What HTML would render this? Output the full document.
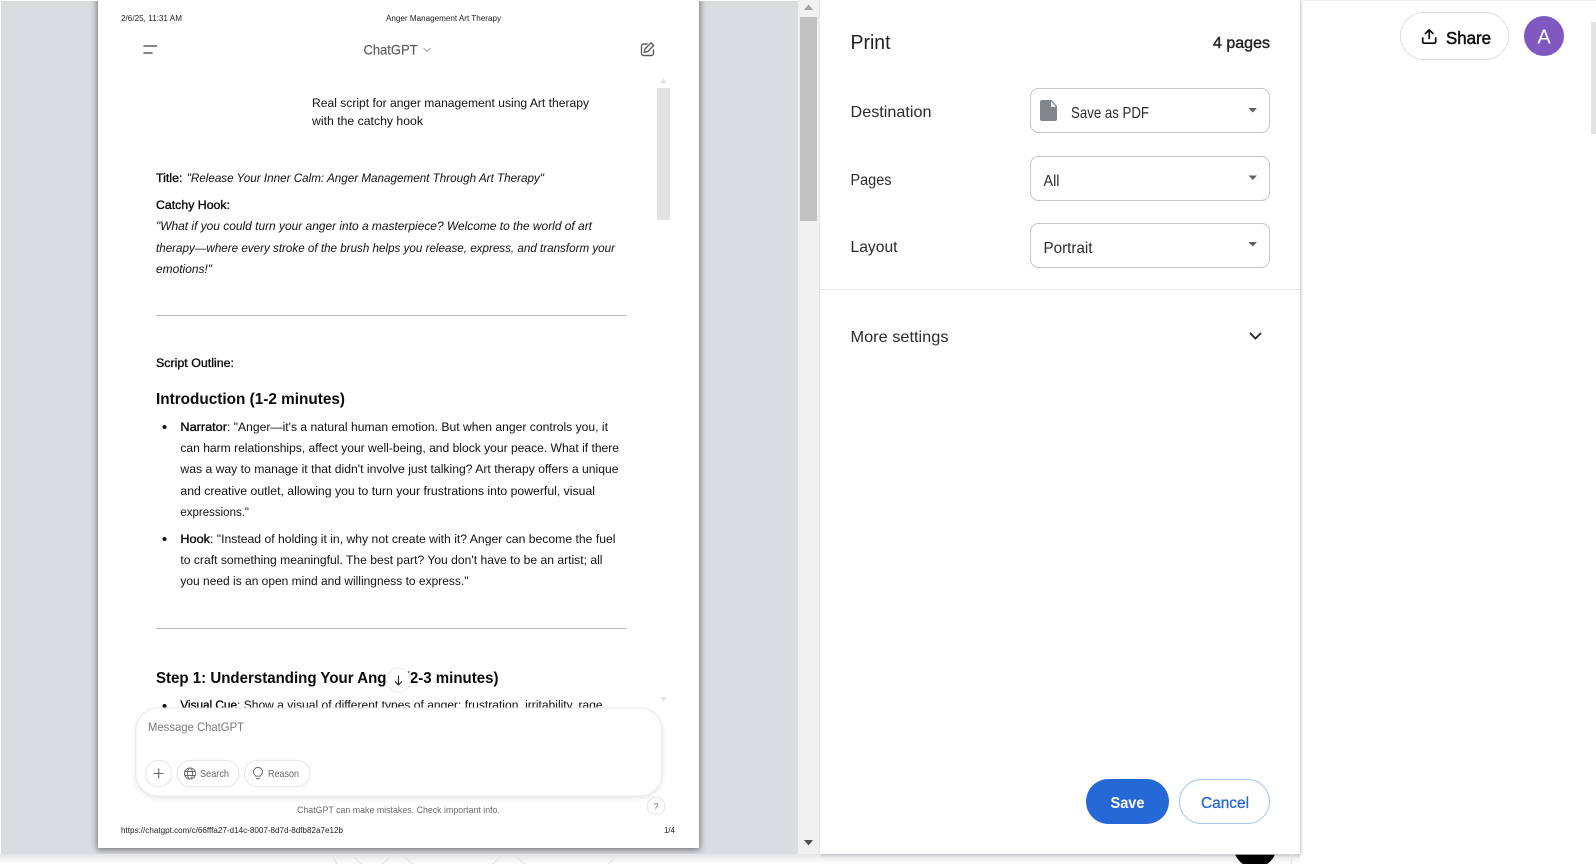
<!DOCTYPE html>
<html lang="en">
<head>
<meta charset="utf-8">
<title>Print</title>
<style>
html,body{margin:0;padding:0;background:#fff;width:1596px;height:864px;overflow:hidden}
#stage{position:absolute;left:0;top:0;width:1596px;height:864px;overflow:hidden;background:#fff}
#fade{position:absolute;left:0;top:854px;width:1300px;height:10px;background:linear-gradient(#e4e4e8,#fff)}
#preview{position:absolute;left:1px;top:1px;width:797px;height:853px;background:#dadce0;overflow:hidden}
#doc{position:absolute;left:97px;top:-10px;width:601px;height:857px;background:#fff;box-shadow:0 1px 6px 1px rgba(60,60,60,.65)}
#track{position:absolute;left:798px;top:0;width:22px;height:854px;background:#f1f1f1}
#panel{position:absolute;left:820px;top:0;width:480px;height:854px;background:#fff;box-shadow:1px 1px 3px rgba(60,60,70,.3)}
#topline{position:absolute;left:1300px;top:0;width:296px;height:1px;background:#f0eef4}
svg{position:absolute;left:0;top:0}
text{font-family:"Liberation Sans",Arial,sans-serif;white-space:pre}
.b{font-size:12.3px;fill:#111}
.bb{font-size:12.3px;fill:#0a0a0a;stroke:#0a0a0a;stroke-width:.35}
.h{font-size:15.5px;fill:#0a0a0a;font-weight:bold}
.m{font-size:8px;fill:#222}
.p{font-size:16px;fill:#2a2a2a}
.g{font-size:10.5px;fill:#666}
</style>
</head>
<body>
<div id="stage">
<div id="fade"></div>
<div id="preview"><div id="doc"></div></div>
<div id="track"></div>
<div id="panel"></div>
<div id="topline"></div>
<svg width="1596" height="864" viewBox="0 0 1596 864" xmlns="http://www.w3.org/2000/svg">
  <!-- faint background arcs -->
  <g fill="none" stroke="#e2e2e2" stroke-width="1">
    <path d="M333 854q1 5 4 10M352 854q3 6 10 10M392 854q-3 6-10 10M403 854q4 6 10 10M502 854q-4 6-10 10M515 854q4 6 10 10M617 854q-3 6-9 10M1292 854q0 5-1 10"/>
  </g>
  <circle cx="1255" cy="846" r="21.7" fill="#000"/>
  <rect x="1200" y="820" width="100" height="34" fill="#fff"/>
  <rect x="1200" y="854" width="100" height="1" fill="#dcdce0" opacity=".7"/>

  <!-- doc header / footer -->
  <text class="m" x="121" y="21" textLength="61" lengthAdjust="spacingAndGlyphs">2/6/25, 11:31 AM</text>
  <text class="m" x="386" y="21" textLength="115" lengthAdjust="spacingAndGlyphs">Anger Management Art Therapy</text>
  <text class="m" x="121" y="833" textLength="222" lengthAdjust="spacingAndGlyphs">https://chatgpt.com/c/66fffa27-d14c-8007-8d7d-8dfb82a7e12b</text>
  <text class="m" x="664" y="833" textLength="11" lengthAdjust="spacingAndGlyphs">1/4</text>

  <!-- chat header -->
  <g stroke="#5d5d5d" stroke-width="1.5" fill="none" stroke-linecap="round">
    <path d="M144 46h12.500M144 53h8"/>
  </g>
  <text x="363.5" y="54.5" font-size="14" fill="#5d5d5d" stroke="#5d5d5d" stroke-width=".2" textLength="54" lengthAdjust="spacingAndGlyphs">ChatGPT</text>
  <path d="M423.5 48l3.5 3.500 3.500-3.500" fill="none" stroke="#a5a5a5" stroke-width="1"/>
  <g fill="none" stroke="#5d5d5d" stroke-width="1.400" stroke-linejoin="round" stroke-linecap="round">
    <path d="M647 44h-3.500a2 2 0 0 0-2 2v7.500a2 2 0 0 0 2 2h8a2 2 0 0 0 2-2V50"/>
    <path d="M651 42.800l2.600 2.600-6 6.200-3.300.7.700-3.300z"/>
  </g>

  <!-- inner scrollbar -->
  <path d="M660 83h7l-3.500-4.500z" fill="#e2e2e2"/>
  <rect x="657" y="88" width="13" height="132" fill="#e3e3e3"/>
  <path d="M660 697h7l-3.500 4.500z" fill="#e2e2e2"/>

  <!-- body text -->
  <text class="b" x="312" y="107" textLength="277" lengthAdjust="spacingAndGlyphs">Real script for anger management using Art therapy</text>
  <text class="b" x="312" y="125" textLength="111" lengthAdjust="spacingAndGlyphs">with the catchy hook</text>

  <text class="bb" x="156" y="182" textLength="26.500" lengthAdjust="spacingAndGlyphs">Title:</text>
  <text class="b" font-style="italic" x="186.700" y="182" textLength="357.300" lengthAdjust="spacingAndGlyphs">"Release Your Inner Calm: Anger Management Through Art Therapy"</text>
  <text class="bb" x="156" y="209" textLength="74" lengthAdjust="spacingAndGlyphs">Catchy Hook:</text>
  <text class="b" font-style="italic" x="156" y="230" textLength="436" lengthAdjust="spacingAndGlyphs">"What if you could turn your anger into a masterpiece? Welcome to the world of art</text>
  <text class="b" font-style="italic" x="156" y="252" textLength="459" lengthAdjust="spacingAndGlyphs">therapy—where every stroke of the brush helps you release, express, and transform your</text>
  <text class="b" font-style="italic" x="156" y="273" textLength="56" lengthAdjust="spacingAndGlyphs">emotions!"</text>
  <rect x="156" y="315" width="470" height="1" fill="#b8b8b8"/>

  <text class="bb" x="156" y="367" textLength="78" lengthAdjust="spacingAndGlyphs">Script Outline:</text>
  <text class="h" x="156" y="404" textLength="189" lengthAdjust="spacingAndGlyphs">Introduction (1-2 minutes)</text>

  <circle cx="164.500" cy="427" r="2" fill="#111"/>
  <text class="bb" x="180.400" y="431" textLength="46.600" lengthAdjust="spacingAndGlyphs">Narrator</text>
  <text class="b" x="227" y="431" textLength="381" lengthAdjust="spacingAndGlyphs">: "Anger—it's a natural human emotion. But when anger controls you, it</text>
  <text class="b" x="180.400" y="452" textLength="438.600" lengthAdjust="spacingAndGlyphs">can harm relationships, affect your well-being, and block your peace. What if there</text>
  <text class="b" x="180.400" y="473" textLength="438.200" lengthAdjust="spacingAndGlyphs">was a way to manage it that didn't involve just talking? Art therapy offers a unique</text>
  <text class="b" x="180.400" y="495" textLength="414.600" lengthAdjust="spacingAndGlyphs">and creative outlet, allowing you to turn your frustrations into powerful, visual</text>
  <text class="b" x="180.400" y="516" textLength="68.600" lengthAdjust="spacingAndGlyphs">expressions."</text>

  <circle cx="164.500" cy="539" r="2" fill="#111"/>
  <text class="bb" x="180.400" y="543" textLength="29.600" lengthAdjust="spacingAndGlyphs">Hook</text>
  <text class="b" x="210" y="543" textLength="405.500" lengthAdjust="spacingAndGlyphs">: "Instead of holding it in, why not create with it? Anger can become the fuel</text>
  <text class="b" x="180.400" y="564" textLength="422.100" lengthAdjust="spacingAndGlyphs">to craft something meaningful. The best part? You don't have to be an artist; all</text>
  <text class="b" x="180.400" y="585" textLength="288.100" lengthAdjust="spacingAndGlyphs">you need is an open mind and willingness to express."</text>
  <rect x="156" y="628" width="470" height="1" fill="#b8b8b8"/>

  <text class="h" x="156" y="683" textLength="342.500" lengthAdjust="spacingAndGlyphs">Step 1: Understanding Your Anger (2-3 minutes)</text>
  <circle cx="398.500" cy="680" r="12" fill="#fff" stroke="#ececec"/>
  <path d="M398.500 675.500v9.500M395 681.500l3.500 3.500 3.500-3.500" fill="none" stroke="#222" stroke-width="1.100"/>

  <circle cx="164.500" cy="706" r="2" fill="#111"/>
  <text class="bb" x="180.400" y="709" textLength="56.600" lengthAdjust="spacingAndGlyphs">Visual Cue</text>
  <text class="b" x="237" y="709" textLength="369" lengthAdjust="spacingAndGlyphs">: Show a visual of different types of anger: frustration, irritability, rage.</text>

  <!-- input -->
  <defs>
    <filter id="sh" x="-5%" y="-15%" width="110%" height="130%">
      <feDropShadow dx="0" dy="2" stdDeviation="2.500" flood-color="#000" flood-opacity=".09"/>
    </filter>
  </defs>
  <rect x="135.700" y="708" width="526.300" height="88" rx="22" fill="#fff" stroke="#e8e8e8" filter="url(#sh)"/>
  <text x="148" y="731" font-size="12.300" fill="#7a7a7a" textLength="96" lengthAdjust="spacingAndGlyphs">Message ChatGPT</text>
  <circle cx="158.700" cy="773.500" r="13.200" fill="#fff" stroke="#e5e5e5"/>
  <path d="M158.700 768.500v10M153.700 773.500h10" stroke="#666" stroke-width="1.100" fill="none"/>
  <rect x="177" y="760.200" width="62" height="26.600" rx="13.300" fill="#fff" stroke="#e5e5e5"/>
  <g fill="none" stroke="#666" stroke-width=".9">
    <circle cx="190" cy="773.500" r="5.600"/>
    <ellipse cx="190" cy="773.500" rx="2.500" ry="5.600"/>
    <path d="M184.600 771.500h10.800M184.600 775.500h10.800"/>
  </g>
  <text class="g" x="200" y="777" textLength="29" lengthAdjust="spacingAndGlyphs">Search</text>
  <rect x="244.500" y="760.200" width="65.500" height="26.600" rx="13.300" fill="#fff" stroke="#e5e5e5"/>
  <g fill="none" stroke="#666" stroke-width=".95" stroke-linecap="round">
    <path d="M255.600 776.200c-.2-1.200-2.200-2-2.200-4.200a4.600 4.600 0 0 1 9.200 0c0 2.200-2 3-2.200 4.200z"/>
    <path d="M256.200 778.600h3.600"/>
  </g>
  <text class="g" x="268" y="777" textLength="31" lengthAdjust="spacingAndGlyphs">Reason</text>
  <text x="297" y="813" font-size="9.500" fill="#6b6b6b" textLength="203" lengthAdjust="spacingAndGlyphs">ChatGPT can make mistakes. Check important info.</text>
  <circle cx="656" cy="806" r="8.700" fill="#fff" stroke="#e5e5e5"/>
  <text x="653.500" y="809.500" font-size="9" fill="#777">?</text>

  <!-- preview scrollbar -->
  <path d="M804 10h9l-4.500-5.500z" fill="#a3a3a3"/>
  <rect x="800" y="17" width="17" height="204" fill="#c1c1c1"/>
  <path d="M804 840h9l-4.500 5.500z" fill="#505050"/>

  <!-- print panel -->
  <text x="850.500" y="49" font-size="20" fill="#202124" textLength="40" lengthAdjust="spacingAndGlyphs">Print</text>
  <text x="1213" y="48" font-size="16" fill="#202124" stroke="#202124" stroke-width=".4" textLength="57" lengthAdjust="spacingAndGlyphs">4 pages</text>

  <text class="p" x="850.500" y="117" textLength="81" lengthAdjust="spacingAndGlyphs">Destination</text>
  <text class="p" x="850.500" y="185" textLength="41" lengthAdjust="spacingAndGlyphs">Pages</text>
  <text class="p" x="850.500" y="252" textLength="47" lengthAdjust="spacingAndGlyphs">Layout</text>

  <g fill="#fff" stroke="#c6c6c6" stroke-width="1">
    <rect x="1030.500" y="88.500" width="239" height="44" rx="8"/>
    <rect x="1030.500" y="156.500" width="239" height="44" rx="8"/>
    <rect x="1030.500" y="223.500" width="239" height="44" rx="8"/>
  </g>
  <path d="M1042 100h9.500l5.500 6v13a2 2 0 0 1-2 2h-13a2 2 0 0 1-2-2v-17a2 2 0 0 1 2-2z" fill="#80868b"/>
  <path d="M1051 101.500l5 5.300h-5z" fill="#fff"/>
  <text class="p" x="1071" y="118" textLength="78" lengthAdjust="spacingAndGlyphs">Save as PDF</text>
  <text class="p" x="1043.500" y="186" textLength="16" lengthAdjust="spacingAndGlyphs">All</text>
  <text class="p" x="1043.500" y="253" textLength="49" lengthAdjust="spacingAndGlyphs">Portrait</text>
  <g fill="#5f6368">
    <path d="M1248.500 108h8.500l-4.250 4.500z"/>
    <path d="M1248.500 175.500h8.500l-4.250 4.500z"/>
    <path d="M1248.500 242h8.500l-4.250 4.500z"/>
  </g>
  <rect x="820" y="289" width="480" height="1" fill="#e8e8e8"/>
  <text class="p" x="850.500" y="342" textLength="98" lengthAdjust="spacingAndGlyphs">More settings</text>
  <path d="M1250 333l5.500 5.500 5.500-5.500" fill="none" stroke="#202124" stroke-width="1.800"/>

  <rect x="1086" y="779" width="83" height="45" rx="22.500" fill="#2569d6"/>
  <text x="1127.500" y="808" font-size="15.500" font-weight="bold" fill="#fff" text-anchor="middle" textLength="34" lengthAdjust="spacingAndGlyphs">Save</text>
  <rect x="1179.500" y="779.500" width="90" height="44" rx="22" fill="#fff" stroke="#a9c5f3"/>
  <text x="1225" y="808" font-size="15.500" fill="#2569d6" stroke="#2569d6" stroke-width=".3" text-anchor="middle" textLength="48" lengthAdjust="spacingAndGlyphs">Cancel</text>

  <!-- right top -->
  <rect x="1400.500" y="12.500" width="108" height="47" rx="23.500" fill="#fff" stroke="#dedede"/>
  <path d="M1429.200 38.500V30M1425.500 33.500l3.700-3.700 3.700 3.700M1422.700 38v3.700a1.500 1.500 0 0 0 1.500 1.500h10a1.500 1.500 0 0 0 1.500-1.500V38" fill="none" stroke="#0d0d0d" stroke-width="1.700" stroke-linecap="round" stroke-linejoin="round"/>
  <text x="1446" y="44" font-size="17.500" fill="#0d0d0d" stroke="#0d0d0d" stroke-width=".5" textLength="45" lengthAdjust="spacingAndGlyphs">Share</text>
  <circle cx="1544" cy="36" r="20" fill="#8059c0"/>
  <text x="1544" y="43.500" font-size="20" fill="#fff" text-anchor="middle">A</text>
  <rect x="1591" y="22" width="5" height="112" fill="#e3e3e3"/>
</svg>
</div>
</body>
</html>
